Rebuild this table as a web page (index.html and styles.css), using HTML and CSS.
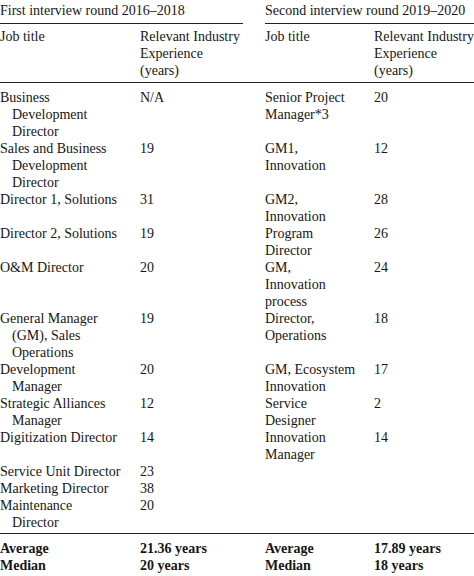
FILE: index.html
```html
<!DOCTYPE html>
<html>
<head>
<meta charset="utf-8">
<link rel="stylesheet" href="styles.css">
</head>
<body>
<div class="table">
  <div class="row titles">
    <div class="title title-left">First interview round 2016–2018</div>
    <div class="title title-right">Second interview round 2019–2020</div>
  </div>
  <div class="row head">
    <div class="cell">Job title</div>
    <div class="cell">Relevant Industry<br>Experience<br>(years)</div>
    <div class="cell">Job title</div>
    <div class="cell">Relevant Industry<br>Experience<br>(years)</div>
  </div>
  <div class="row body">
    <div class="cell job">Business<br>Development<br>Director</div>
    <div class="cell">N/A</div>
    <div class="cell">Senior Project<br>Manager*3</div>
    <div class="cell">20</div>

    <div class="cell job">Sales and Business<br>Development<br>Director</div>
    <div class="cell">19</div>
    <div class="cell">GM1,<br>Innovation</div>
    <div class="cell">12</div>

    <div class="cell job">Director 1, Solutions</div>
    <div class="cell">31</div>
    <div class="cell">GM2,<br>Innovation</div>
    <div class="cell">28</div>

    <div class="cell job">Director 2, Solutions</div>
    <div class="cell">19</div>
    <div class="cell">Program<br>Director</div>
    <div class="cell">26</div>

    <div class="cell job">O&amp;M Director</div>
    <div class="cell">20</div>
    <div class="cell">GM,<br>Innovation<br>process</div>
    <div class="cell">24</div>

    <div class="cell job">General Manager<br>(GM), Sales<br>Operations</div>
    <div class="cell">19</div>
    <div class="cell">Director,<br>Operations</div>
    <div class="cell">18</div>

    <div class="cell job">Development<br>Manager</div>
    <div class="cell">20</div>
    <div class="cell">GM, Ecosystem<br>Innovation</div>
    <div class="cell">17</div>

    <div class="cell job">Strategic Alliances<br>Manager</div>
    <div class="cell">12</div>
    <div class="cell">Service<br>Designer</div>
    <div class="cell">2</div>

    <div class="cell job">Digitization Director</div>
    <div class="cell">14</div>
    <div class="cell">Innovation<br>Manager</div>
    <div class="cell">14</div>

    <div class="cell job">Service Unit Director</div>
    <div class="cell">23</div>
    <div class="cell"></div>
    <div class="cell"></div>

    <div class="cell job">Marketing Director</div>
    <div class="cell">38</div>
    <div class="cell"></div>
    <div class="cell"></div>

    <div class="cell job">Maintenance<br>Director</div>
    <div class="cell">20</div>
    <div class="cell"></div>
    <div class="cell"></div>
  </div>
  <div class="row foot">
    <div class="cell">Average</div>
    <div class="cell">21.36 years</div>
    <div class="cell">Average</div>
    <div class="cell">17.89 years</div>
    <div class="cell">Median</div>
    <div class="cell">20 years</div>
    <div class="cell">Median</div>
    <div class="cell">18 years</div>
  </div>
</div>
</body>
</html>
```

FILE: styles.css
```css
html, body {
  margin: 0;
  padding: 0;
  background: #ffffff;
}
body {
  font-family: "Liberation Serif", "Times New Roman", serif;
  font-size: 14px;
  line-height: 17px;
  color: #161616;
  width: 474px;
  height: 576px;
  overflow: hidden;
}
.table {
  width: 474px;
}
.row {
  display: grid;
  grid-template-columns: 140px 125px 109px 100px;
}
.cell {
  white-space: nowrap;
}
.titles {
  grid-template-columns: 265px 209px;
  padding-top: 2px;
}
.title {
  padding-bottom: 4px;
  border-bottom: 1.5px solid #222222;
  white-space: nowrap;
}
.title-left {
  margin-right: 22px;
}
.head {
  padding-top: 4px;
  padding-bottom: 3px;
  border-bottom: 1.5px solid #222222;
}
.body {
  padding-top: 6px;
  padding-bottom: 2px;
  border-bottom: 1.5px solid #222222;
  min-height: 442px;
  grid-auto-rows: min-content;
}
.job {
  padding-left: 12px;
  text-indent: -12px;
}
.foot {
  padding-top: 6px;
  font-weight: bold;
}
```
